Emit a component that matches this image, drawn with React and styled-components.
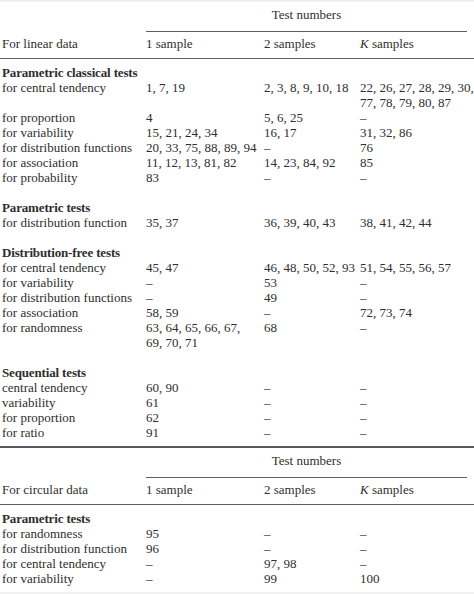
import React from 'react';
import styled, {createGlobalStyle} from 'styled-components';

const GlobalStyle = createGlobalStyle`
  html, body {
    margin: 0;
    padding: 0;
    background: #fff;
  }
`;

const linear = [
  {
    title: 'Parametric classical tests',
    rows: [
      ['for central tendency', '1, 7, 19', '2, 3, 8, 9, 10, 18', ['22, 26, 27, 28, 29, 30,', '77, 78, 79, 80, 87']],
      ['for proportion', '4', '5, 6, 25', '–'],
      ['for variability', '15, 21, 24, 34', '16, 17', '31, 32, 86'],
      ['for distribution functions', '20, 33, 75, 88, 89, 94', '–', '76'],
      ['for association', '11, 12, 13, 81, 82', '14, 23, 84, 92', '85'],
      ['for probability', '83', '–', '–'],
    ],
  },
  {
    title: 'Parametric tests',
    rows: [
      ['for distribution function', '35, 37', '36, 39, 40, 43', '38, 41, 42, 44'],
    ],
  },
  {
    title: 'Distribution-free tests',
    rows: [
      ['for central tendency', '45, 47', '46, 48, 50, 52, 93', '51, 54, 55, 56, 57'],
      ['for variability', '–', '53', '–'],
      ['for distribution functions', '–', '49', '–'],
      ['for association', '58, 59', '–', '72, 73, 74'],
      ['for randomness', ['63, 64, 65, 66, 67,', '69, 70, 71'], '68', '–'],
    ],
  },
  {
    title: 'Sequential tests',
    rows: [
      ['central tendency', '60, 90', '–', '–'],
      ['variability', '61', '–', '–'],
      ['for proportion', '62', '–', '–'],
      ['for ratio', '91', '–', '–'],
    ],
  },
];

const circular = [
  {
    title: 'Parametric tests',
    rows: [
      ['for randomness', '95', '–', '–'],
      ['for distribution function', '96', '–', '–'],
      ['for central tendency', '–', '97, 98', '–'],
      ['for variability', '–', '99', '100'],
    ],
  },
];

const renderValue = (v) => {
  if (Array.isArray(v)) {
    return v.map((line, i) => <Line key={i}>{line}</Line>);
  }
  return v;
};

const TestTable = ({label, groups, last}) => (
  <Table $last={last}>
    <colgroup>
      <col style={{width: 146}} />
      <col style={{width: 118}} />
      <col style={{width: 96}} />
      <col />
    </colgroup>
    <thead>
      <tr>
        <th />
        <TitleCell colSpan={3}>
          <Title>Test numbers</Title>
        </TitleCell>
      </tr>
      <HeadRow>
        <HeadCell>{label}</HeadCell>
        <HeadCell>1 sample</HeadCell>
        <HeadCell>2 samples</HeadCell>
        <HeadCell><i>K</i> samples</HeadCell>
      </HeadRow>
    </thead>
    <tbody>
      {groups.map((g, gi) => (
        <React.Fragment key={g.title}>
          {gi > 0 && (
            <tr>
              <Spacer colSpan={4} />
            </tr>
          )}
          <tr>
            <GroupCell colSpan={4} $first={gi === 0}>{g.title}</GroupCell>
          </tr>
          {g.rows.map((r, ri) => (
            <tr key={ri}>
              <LabelCell>{r[0]}</LabelCell>
              <Cell>{renderValue(r[1])}</Cell>
              <Cell>{renderValue(r[2])}</Cell>
              <Cell>{renderValue(r[3])}</Cell>
            </tr>
          ))}
          {gi === groups.length - 1 && (
            <tr>
              <EndCell colSpan={4} />
            </tr>
          )}
        </React.Fragment>
      ))}
    </tbody>
  </Table>
);

export default function App() {
  return (
    <Page>
      <GlobalStyle />
      <TestTable label="For linear data" groups={linear} />
      <TestTable label="For circular data" groups={circular} last />
    </Page>
  );
}

const Page = styled.div`
  width: 474px;
  height: 594px;
  overflow: hidden;
  border-top: 2px solid #efefef;
  box-sizing: border-box;
  font-family: "Liberation Serif", "Times New Roman", serif;
  font-size: 13px;
  color: #2e2e2e;
  background: #fff;
`;

const Table = styled.table`
  width: 474px;
  table-layout: fixed;
  border-collapse: collapse;
  border-bottom: ${p => (p.$last ? '3px solid #f0f0f0' : '2px solid #5a5a5a')};

  th, td {
    padding: 0;
    text-align: left;
    vertical-align: top;
    line-height: 15px;
    font-weight: normal;
    white-space: nowrap;
  }
`;

const TitleCell = styled.th`
  && {
    padding: 5px 7px 0 0;
  }
`;

const Title = styled.div`
  text-align: center;
  padding-bottom: 9px;
  border-bottom: 1.5px solid #5e5e5e;
`;

const HeadRow = styled.tr`
  border-bottom: 1.5px solid #5e5e5e;
`;

const HeadCell = styled.th`
  && {
    padding: 4px 0 7px;
  }
  &:first-child {
    padding-left: 2px;
  }
`;

const GroupCell = styled.td`
  && {
    font-weight: bold;
    letter-spacing: -0.15px;
    padding: ${p => (p.$first ? '6px' : '0')} 0 0 2px;
  }
`;

const LabelCell = styled.td`
  && {
    padding-left: 2px;
  }
`;

const Cell = styled.td``;

const Spacer = styled.td`
  height: 15px;
`;

const EndCell = styled.td`
  height: 6px;
`;

const Line = styled.div``;
